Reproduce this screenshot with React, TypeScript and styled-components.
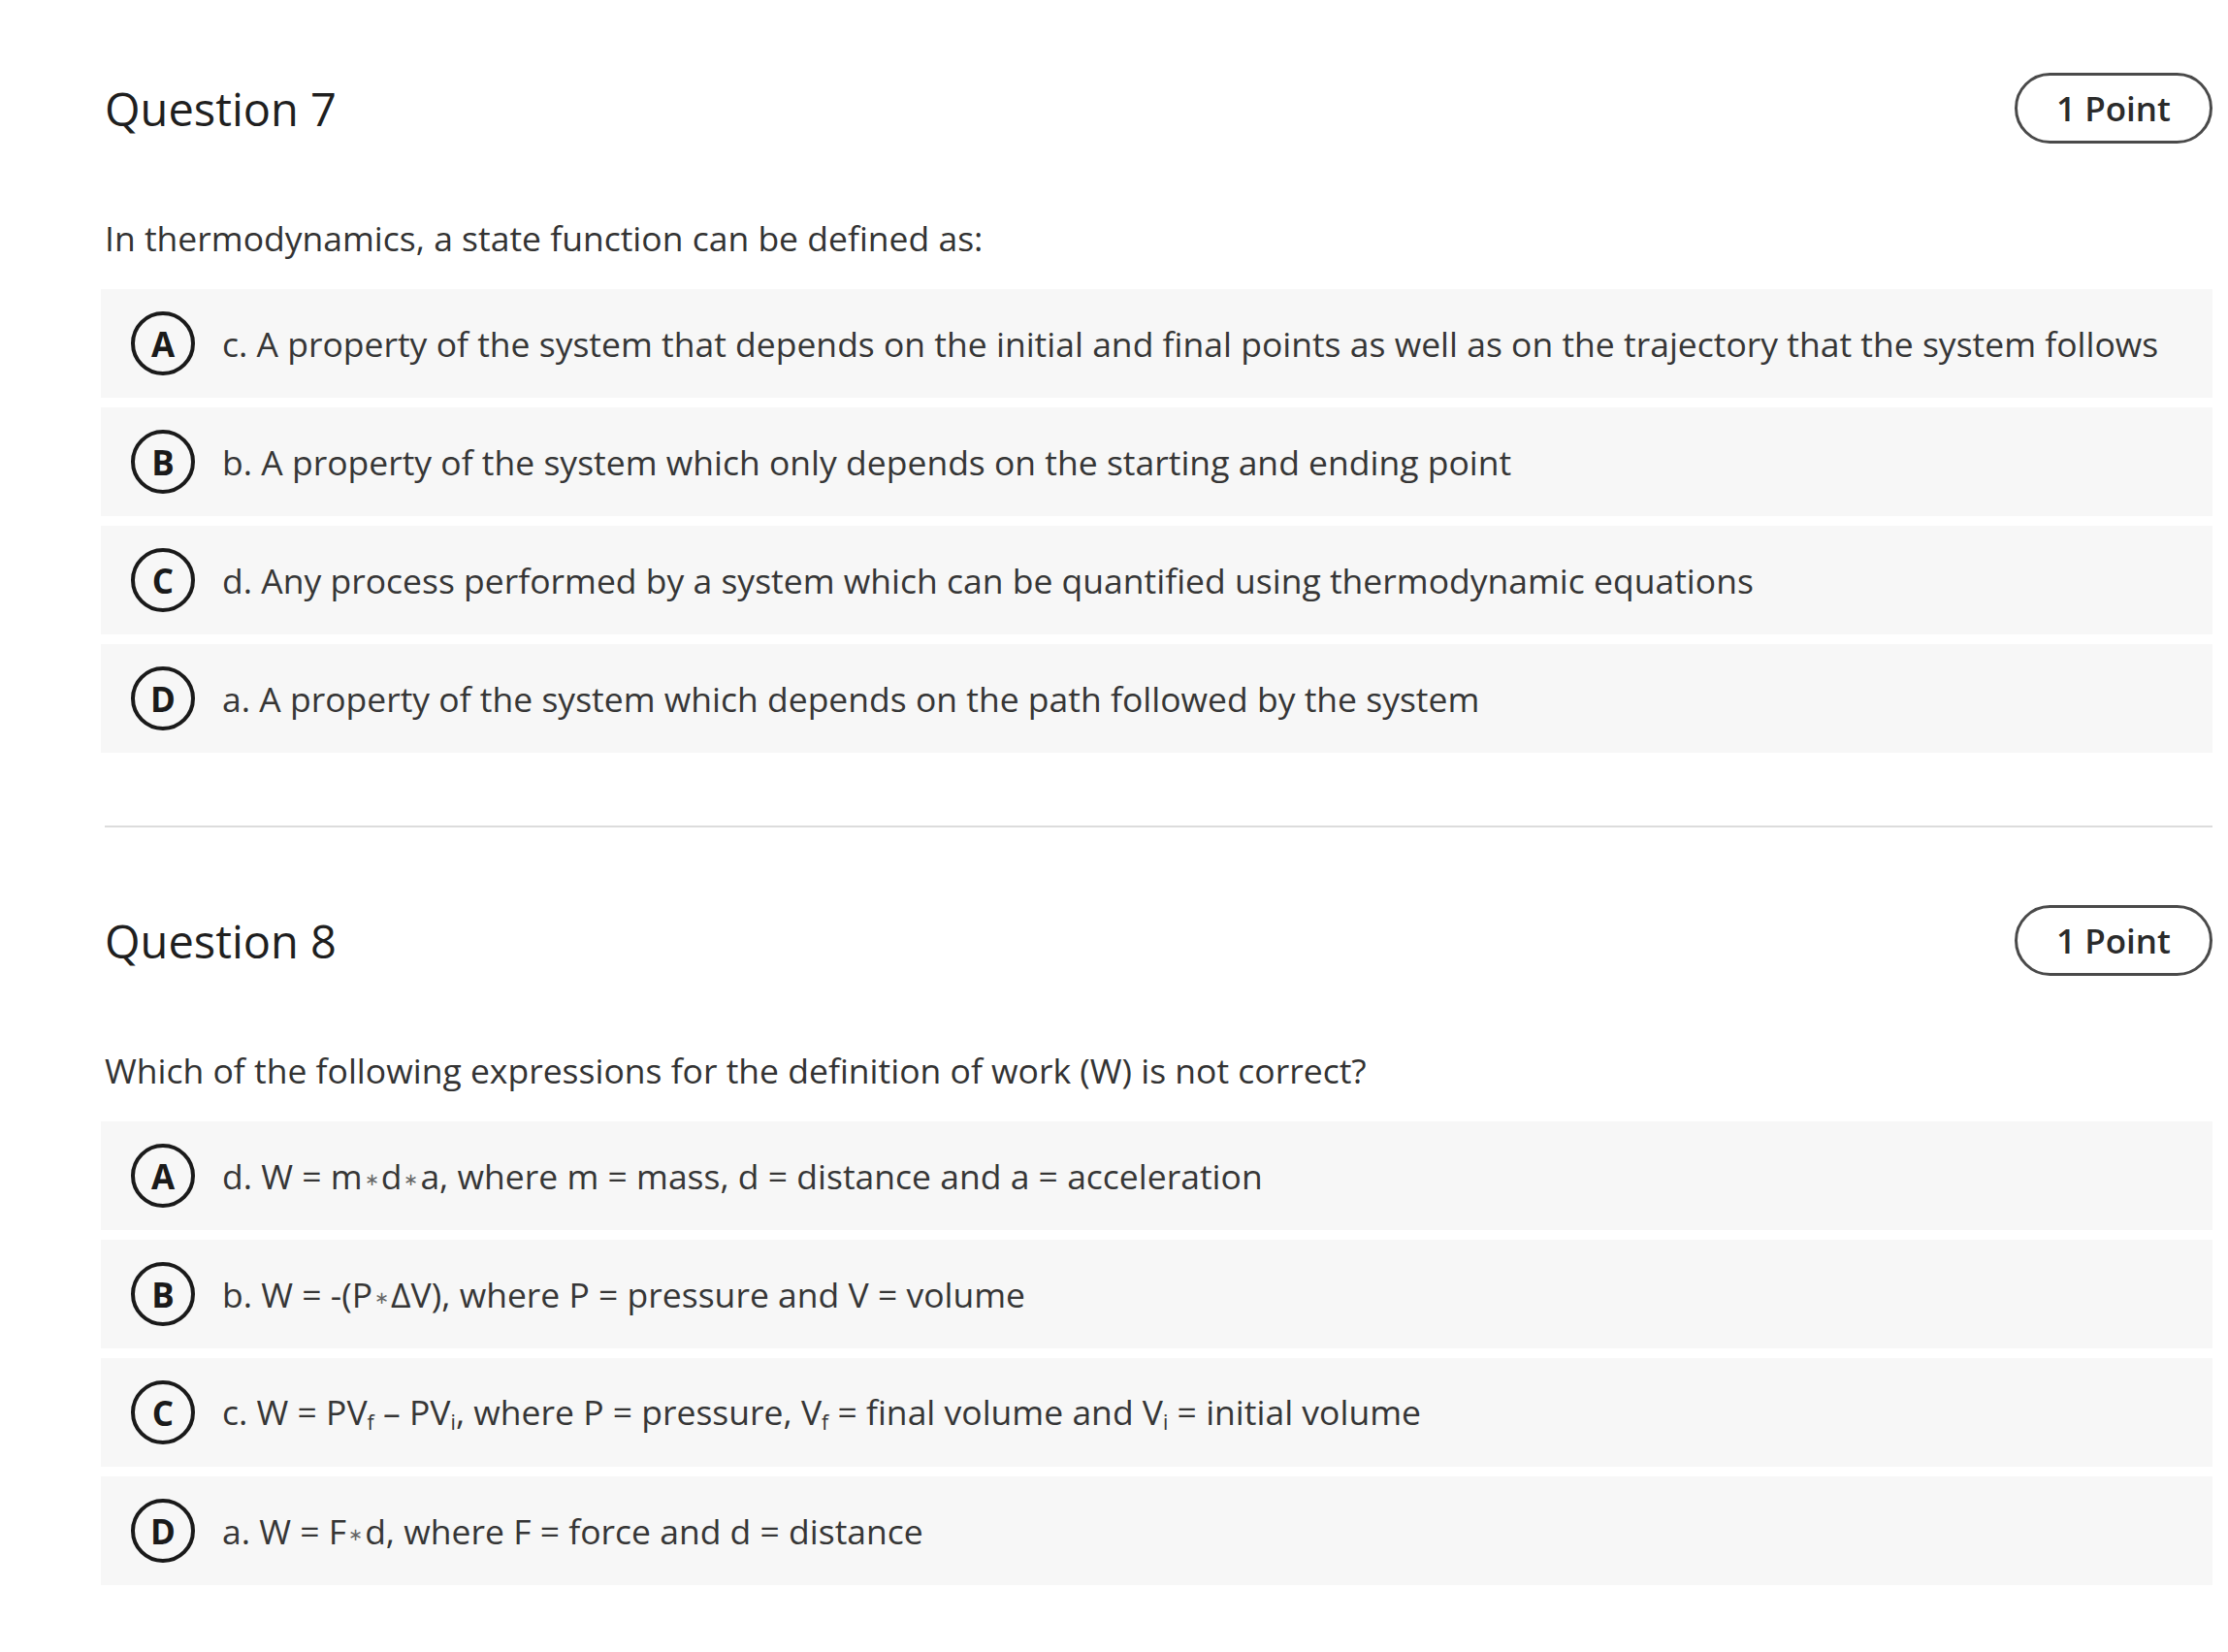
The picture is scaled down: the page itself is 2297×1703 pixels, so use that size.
import React, { FunctionComponent } from "react";
import styled, { createGlobalStyle } from "styled-components";

const GlobalStyle = createGlobalStyle`
  html, body {
    margin: 0;
    padding: 0;
    background: #ffffff;
  }
  body {
    font-family: "Open Sans", "Liberation Sans", sans-serif;
    color: #333333;
  }
`;

const Page = styled.div`
  padding: 75px 16px 60px 104px;
  display: flex;
  flex-direction: column;
`;

const QuestionSection = styled.section`
  display: flex;
  flex-direction: column;
`;

const HeaderRow = styled.div`
  display: flex;
  align-items: center;
  justify-content: space-between;
  height: 73px;
  padding-left: 4px;
`;

const QuestionTitle = styled.h2`
  margin: 0;
  font-size: 47px;
  font-weight: 400;
  color: #1f1f1f;
`;

const PointPill = styled.div`
  box-sizing: border-box;
  width: 204px;
  height: 73px;
  border: 3px solid #4a4a4a;
  border-radius: 37px;
  display: flex;
  align-items: center;
  justify-content: center;
  font-size: 35px;
  font-weight: 600;
  color: #2b2b2b;
`;

const QuestionText = styled.p`
  margin: 74px 0 30px 4px;
  font-size: 35.5px;
  line-height: 46px;
  color: #333333;
`;

const OptionList = styled.div`
  display: flex;
  flex-direction: column;
  gap: 10px;
`;

const OptionRow = styled.div`
  height: 112px;
  background: #f7f7f7;
  display: flex;
  align-items: center;
  padding-left: 31px;
`;

const LetterBadge = styled.span`
  box-sizing: border-box;
  width: 66px;
  height: 66px;
  border: 4px solid #1a1a1a;
  border-radius: 50%;
  display: flex;
  align-items: center;
  justify-content: center;
  font-size: 35px;
  font-weight: 700;
  color: #1a1a1a;
  flex-shrink: 0;
`;

const OptionText = styled.span`
  margin-left: 28px;
  font-size: 35.5px;
  color: #363636;
  white-space: nowrap;
`;

const Sub = styled.sub`
  font-size: 0.6em;
  vertical-align: -0.25em;
`;

const Star = styled.span`
  font-size: 0.5em;
  margin: 0 2px;
  vertical-align: 0.25em;
  color: #666666;
`;

const Divider = styled.hr`
  border: none;
  height: 2px;
  background: #dcdcdc;
  margin: 75px 0 80px 4px;
`;

interface Question {
  number: number;
  prompt: string;
  options: React.ReactNode[];
}

const questions: Question[] = [
  {
    number: 7,
    prompt: "In thermodynamics, a state function can be defined as:",
    options: [
      "c. A property of the system that depends on the initial and final points as well as on the trajectory that the system follows",
      "b. A property of the system which only depends on the starting and ending point",
      "d. Any process performed by a system which can be quantified using thermodynamic equations",
      "a. A property of the system which depends on the path followed by the system",
    ],
  },
  {
    number: 8,
    prompt:
      "Which of the following expressions for the definition of work (W) is not correct?",
    options: [
      <>
        d. W = m<Star>∗</Star>d<Star>∗</Star>a, where m = mass, d = distance
        and a = acceleration
      </>,
      <>
        b. W = -(P<Star>∗</Star>ΔV), where P = pressure and V = volume
      </>,
      <>
        c. W = PV<Sub>f</Sub> – PV<Sub>i</Sub>, where P = pressure, V
        <Sub>f</Sub> = final volume and V<Sub>i</Sub> = initial volume
      </>,
      <>
        a. W = F<Star>∗</Star>d, where F = force and d = distance
      </>,
    ],
  },
];

const letters = ["A", "B", "C", "D"];

const QuestionBlock: FunctionComponent<{ question: Question }> = ({
  question,
}) => (
  <QuestionSection>
    <HeaderRow>
      <QuestionTitle>Question {question.number}</QuestionTitle>
      <PointPill>1 Point</PointPill>
    </HeaderRow>
    <QuestionText>{question.prompt}</QuestionText>
    <OptionList>
      {question.options.map((option, i) => (
        <OptionRow key={letters[i]}>
          <LetterBadge>{letters[i]}</LetterBadge>
          <OptionText>{option}</OptionText>
        </OptionRow>
      ))}
    </OptionList>
  </QuestionSection>
);

const App: FunctionComponent = () => (
  <>
    <GlobalStyle />
    <Page>
      <QuestionBlock question={questions[0]} />
      <Divider />
      <QuestionBlock question={questions[1]} />
    </Page>
  </>
);

export default App;
